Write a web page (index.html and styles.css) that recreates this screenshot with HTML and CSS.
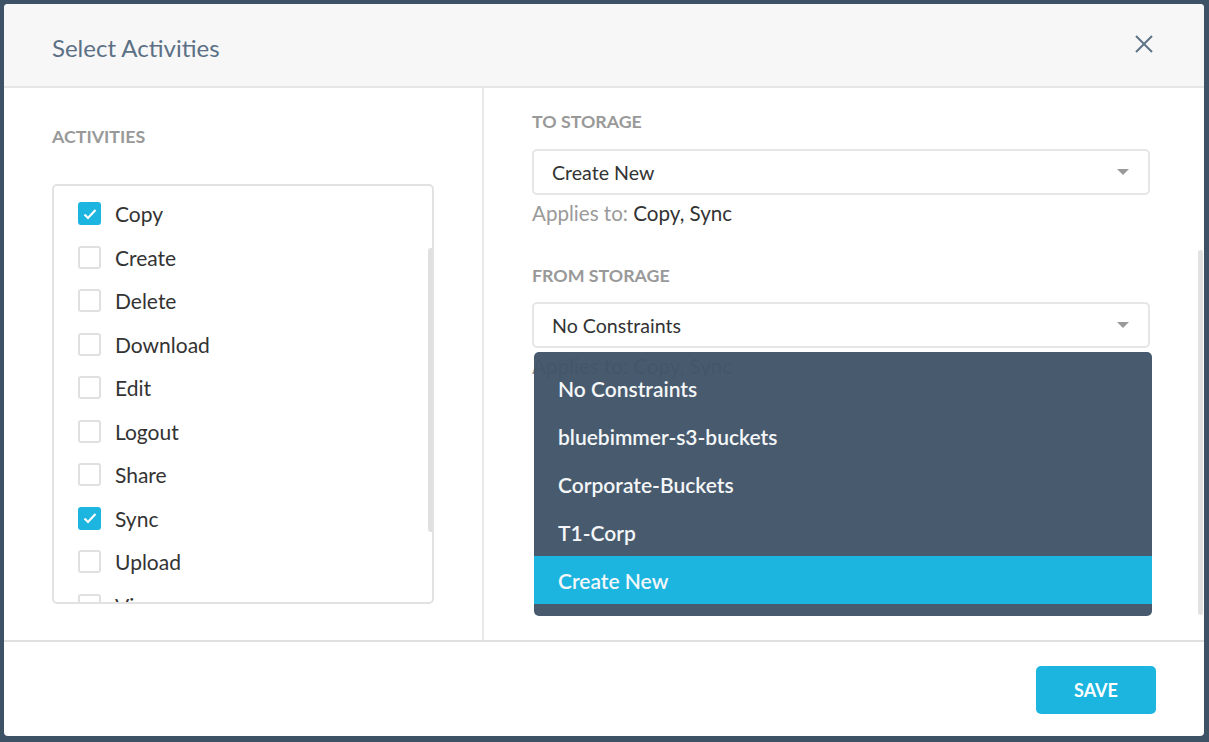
FILE: index.html
```html
<!DOCTYPE html>
<html>
<head>
<meta charset="utf-8">
<link rel="stylesheet" href="styles.css">
</head>
<body>
<div class="modal">
  <div class="modal-header">
    <h1 class="modal-title">Select Activities</h1>
    <button class="close-btn" aria-label="Close">
      <svg width="20" height="20" viewBox="0 0 20 20"><path d="M2 2 L18 18 M18 2 L2 18" stroke="#5f7387" stroke-width="2" fill="none"/></svg>
    </button>
  </div>
  <div class="modal-body">
    <div class="col-left">
      <div class="section-label">ACTIVITIES</div>
      <div class="list-box">
        <div class="list-item"><span class="cb checked"><svg width="14" height="12" viewBox="0 0 14 12"><path d="M1.5 6.5 L5 10 L12.5 2" stroke="#fff" stroke-width="2.2" fill="none"/></svg></span><span class="item-text">Copy</span></div>
        <div class="list-item"><span class="cb"></span><span class="item-text">Create</span></div>
        <div class="list-item"><span class="cb"></span><span class="item-text">Delete</span></div>
        <div class="list-item"><span class="cb"></span><span class="item-text">Download</span></div>
        <div class="list-item"><span class="cb"></span><span class="item-text">Edit</span></div>
        <div class="list-item"><span class="cb"></span><span class="item-text">Logout</span></div>
        <div class="list-item"><span class="cb"></span><span class="item-text">Share</span></div>
        <div class="list-item"><span class="cb checked"><svg width="14" height="12" viewBox="0 0 14 12"><path d="M1.5 6.5 L5 10 L12.5 2" stroke="#fff" stroke-width="2.2" fill="none"/></svg></span><span class="item-text">Sync</span></div>
        <div class="list-item"><span class="cb"></span><span class="item-text">Upload</span></div>
        <div class="list-item"><span class="cb"></span><span class="item-text">View</span></div>
        <div class="list-scroll-thumb"></div>
      </div>
    </div>
    <div class="col-right">
      <div class="section-label">TO STORAGE</div>
      <div class="select"><span>Create New</span><span class="caret"></span></div>
      <div class="applies"><span class="applies-key">Applies to:</span> Copy, Sync</div>
      <div class="section-label second">FROM STORAGE</div>
      <div class="select-wrap">
        <div class="select"><span>No Constraints</span><span class="caret"></span></div>
        <div class="applies">Applies to: Copy, Sync</div>
        <ul class="dropdown">
          <li class="dd-item">No Constraints</li>
          <li class="dd-item">bluebimmer-s3-buckets</li>
          <li class="dd-item">Corporate-Buckets</li>
          <li class="dd-item">T1-Corp</li>
          <li class="dd-item active">Create New</li>
        </ul>
      </div>
      <div class="right-scroll-thumb"></div>
    </div>
  </div>
  <div class="modal-footer">
    <button class="save-btn">SAVE</button>
  </div>
</div>
</body>
</html>
```
FILE: styles.css
```css
* { box-sizing: border-box; }
html, body { margin: 0; padding: 0; }
body {
  background: #3e5266;
  font-family: Lato, "Open Sans", sans-serif;
  padding: 4px;
  width: 1209px;
  height: 742px;
  overflow: hidden;
}
.modal {
  width: 1200px;
  height: 732px;
  background: #fff;
  border-radius: 4px;
  display: flex;
  flex-direction: column;
  overflow: hidden;
}
.modal-header {
  height: 84px;
  flex: none;
  background: #f7f7f7;
  border-bottom: 2px solid #e6e6e6;
  display: flex;
  align-items: center;
  justify-content: space-between;
  padding: 0 50px 0 48px;
}
.modal-title {
  margin: 0;
  font-size: 24px;
  font-weight: 400;
  color: #5c7085;
  padding-top: 4px;
}
.close-btn {
  background: none;
  border: 0;
  padding: 0;
  width: 20px;
  height: 20px;
  margin-bottom: 2px;
}
.close-btn svg { display: block; }
.modal-body {
  flex: none;
  height: 554px;
  display: flex;
  border-bottom: 2px solid #e0e0e0;
}
.col-left {
  width: 480px;
  flex: none;
  border-right: 2px solid #e8e8e8;
  padding: 38px 0 0 48px;
}
.section-label {
  font-size: 17.8px;
  line-height: 20px;
  font-weight: 700;
  color: #999;
}
.list-box {
  position: relative;
  margin-top: 38px;
  width: 382px;
  height: 420px;
  border: 2px solid #e2e2e2;
  border-radius: 5px;
  overflow: hidden;
  padding: 6px 0 0 24px;
}
.list-item {
  height: 43.5px;
  display: flex;
  align-items: center;
}
.cb {
  width: 23px;
  height: 23px;
  border: 2px solid #e0e0e0;
  border-radius: 3px;
  flex: none;
  display: flex;
  align-items: center;
  justify-content: center;
}
.cb.checked {
  background: #1cb5e0;
  border-color: #1cb5e0;
}
.cb svg { display: block; }
.item-text {
  margin-left: 14px;
  font-size: 21px;
  color: #333;
}
.list-scroll-thumb {
  position: absolute;
  right: -2px;
  top: 62px;
  width: 6px;
  height: 284px;
  background: #e0e0e0;
  border-radius: 3px;
}
.col-right {
  position: relative;
  flex: 1;
  padding: 23px 54px 0 48px;
}
.select {
  margin-top: 18px;
  height: 46px;
  border: 2px solid #e6e6e6;
  border-radius: 5px;
  display: flex;
  align-items: center;
  justify-content: space-between;
  padding: 0 19px 0 18px;
  font-size: 19.6px;
  color: #333;
}
.caret {
  width: 0;
  height: 0;
  border-left: 6px solid transparent;
  border-right: 6px solid transparent;
  border-top: 6px solid #9a9a9a;
}
.applies {
  margin-top: 6px;
  font-size: 20.6px;
  line-height: 24px;
  color: #333;
}
.applies-key { color: #9a9a9a; }
.select-wrap .applies { color: #999; }
.section-label.second { margin-top: 40px; }
.select-wrap {
  position: relative;
  padding-top: 17px;
}
.select-wrap .select { margin-top: 0; }
.dropdown {
  position: absolute;
  left: 2px;
  top: 67px;
  width: 618px;
  margin: 0;
  padding: 12px 0;
  list-style: none;
  background: rgba(62, 82, 102, 0.95);
  border-radius: 5px;
}
.dd-item {
  height: 48px;
  display: flex;
  align-items: center;
  padding-left: 24px;
  font-size: 21px;
  font-weight: 600;
  color: #f4f6f8;
}
.dd-item.active {
  background: #1cb5e0;
}
.right-scroll-thumb {
  position: absolute;
  right: 1px;
  top: 162px;
  width: 5px;
  height: 365px;
  background: #e2e2e2;
  border-radius: 3px;
}
.modal-footer {
  flex: 1;
  display: flex;
  justify-content: flex-end;
  align-items: flex-start;
  padding: 24px 48px 0 0;
}
.save-btn {
  width: 120px;
  height: 48px;
  border: 0;
  border-radius: 5px;
  background: #1cb5e0;
  color: #fff;
  font-family: Lato, sans-serif;
  font-weight: 700;
  font-size: 18px;
}
```
